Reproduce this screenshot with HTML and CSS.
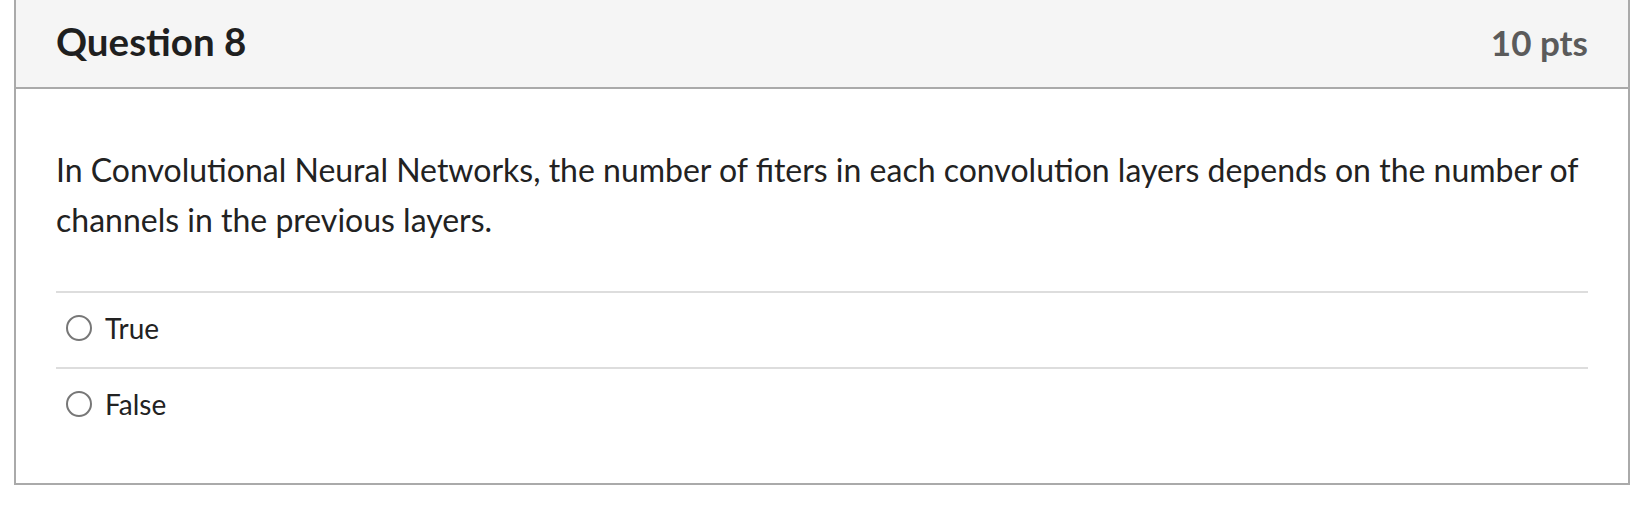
FILE: index.html
```html
<!DOCTYPE html>
<html lang="en">
<head>
<meta charset="utf-8">
<title>Question 8</title>
<link rel="stylesheet" href="styles.css">
</head>
<body>
<div class="card">
  <div class="card-header">
    <h2 class="title">Question 8</h2>
    <span class="points">10 pts</span>
  </div>
  <div class="card-body">
    <p class="question-text">In Convolutional Neural Networks, the number of fiters in each convolution layers depends on the number of channels in the previous layers.</p>
    <div class="answers">
      <label class="answer"><span class="radio"></span><span class="answer-text">True</span></label>
      <label class="answer"><span class="radio"></span><span class="answer-text">False</span></label>
    </div>
  </div>
</div>
</body>
</html>
```

FILE: styles.css
```css
html, body {
  margin: 0;
  padding: 0;
  background: #ffffff;
}

body {
  font-family: Lato, "Noto Sans", sans-serif;
  color: #222222;
}

.card {
  margin: -2px 0 0 14px;
  width: 1616px;
  box-sizing: border-box;
  border: 2px solid #aaaaaa;
  background: #ffffff;
}

.card-header {
  display: flex;
  justify-content: space-between;
  align-items: baseline;
  padding: 19px 40px 22px 40px;
  background: #f5f5f5;
  border-bottom: 2px solid #aaaaaa;
}

.title {
  margin: 0;
  font-size: 38.5px;
  line-height: 45px;
  font-weight: 700;
  color: #1f1f1f;
}

.points {
  font-size: 35px;
  line-height: 45px;
  font-weight: 700;
  color: #5b5b5b;
}

.card-body {
  padding: 56px 40px 40px 40px;
}

.question-text {
  margin: 0 0 46px 0;
  font-size: 32px;
  line-height: 50px;
  color: #222222;
}

.answers {
  display: flex;
  flex-direction: column;
}

.answer {
  display: flex;
  align-items: center;
  height: 70px;
  padding-bottom: 4px;
  box-sizing: content-box;
  border-top: 2px solid #dddddd;
}

.radio {
  width: 26px;
  height: 26px;
  box-sizing: border-box;
  border: 2px solid #777777;
  border-radius: 50%;
  margin-left: 10px;
  margin-right: 13px;
  flex: none;
}

.answer-text {
  font-size: 28px;
  line-height: 34px;
  color: #222222;
}
```
